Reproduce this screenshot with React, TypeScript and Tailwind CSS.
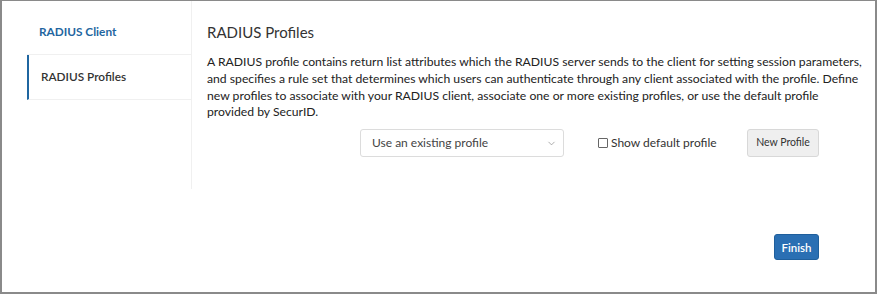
import { ChevronDown } from "lucide-react";

export default function App() {
  return (
    <div
      className="flex h-[294px] w-[877px] border-x-2 border-b-2 border-t border-[#8a8a8a] bg-white text-[#333]"
      style={{ fontFamily: "Lato, 'Open Sans', sans-serif" }}
    >
      <aside className="flex w-[190px] shrink-0 flex-col">
        <div className="flex h-[188px] flex-col border-r border-[#f0f0f0] pl-[25px]">
          <div className="flex h-[54px] items-center border-b border-[#f0f0f0] pl-[12px] pt-[9px] text-[11.8px] font-bold text-[#1f66a0]">
            RADIUS Client
          </div>
          <div className="flex h-[45px] items-center border-b border-l-2 border-[#f0f0f0] border-l-[#1f66a0] pl-[12px] text-[11.8px] font-semibold text-[#333]">
            RADIUS Profiles
          </div>
        </div>
      </aside>

      <main className="flex flex-1 flex-col pl-[15px] pr-[12px] pt-[20px]">
        <h1 className="text-[15px] leading-[22px] text-[#333]">RADIUS Profiles</h1>
        <p className="mt-[11px] max-w-[658px] text-[12.2px] leading-[16.8px] text-[#222]">
          A RADIUS profile contains return list attributes which the RADIUS server sends to the client for setting session parameters, and specifies a rule set that determines which users can authenticate through any client associated with the profile. Define new profiles to associate with your RADIUS client, associate one or more existing profiles, or use the default profile provided by SecurID.
        </p>

        <div className="mt-[8px] flex items-center pr-[44px]">
          <div className="ml-[153px] flex h-[28px] w-[204px] items-center justify-between rounded-[3px] border border-[#dcdcdc] pl-[11px] pr-[6px] text-[12px] text-[#444]">
            <span>Use an existing profile</span>
            <ChevronDown className="h-[11px] w-[11px] text-[#888]" strokeWidth={1.5} />
          </div>
          <label className="ml-[34px] flex items-center gap-[3px] whitespace-nowrap text-[12px] text-[#333]">
            <span className="inline-block h-[10px] w-[10px] rounded-[1px] border border-[#666] bg-white" />
            Show default profile
          </label>
          <div className="flex-1" />
          <button className="flex h-[28px] w-[72px] items-center justify-center rounded-[3px] border border-[#d8d8d8] bg-[#efefef] text-[10.5px] text-[#333]">
            New Profile
          </button>
        </div>

        <div className="mt-[77px] flex justify-end pr-[44px]">
          <button className="flex h-[26px] w-[45px] items-center justify-center rounded-[3px] border border-[#1f5f9c] bg-[#2a6fb3] text-[11.5px] font-semibold text-white">
            Finish
          </button>
        </div>
      </main>
    </div>
  );
}
